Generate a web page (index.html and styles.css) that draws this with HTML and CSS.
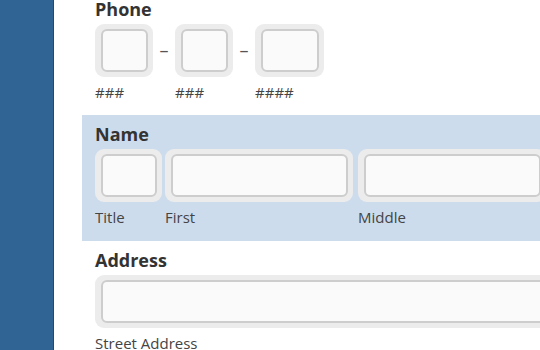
FILE: index.html
```html
<!DOCTYPE html>
<html>
<head>
<meta charset="utf-8">
<link rel="stylesheet" href="styles.css">
</head>
<body>
<div class="page">
  <div class="sidebar"></div>
  <main class="main">
    <ul class="fields">
      <li class="field">
        <h3 class="field-title">Phone</h3>
        <div class="row">
          <div class="part">
            <div class="wrap w-ph3"><input class="inp" type="text"></div>
            <span class="sub">###</span>
          </div>
          <span class="dash">–</span>
          <div class="part">
            <div class="wrap w-ph3"><input class="inp" type="text"></div>
            <span class="sub">###</span>
          </div>
          <span class="dash">–</span>
          <div class="part">
            <div class="wrap w-ph4"><input class="inp" type="text"></div>
            <span class="sub">####</span>
          </div>
        </div>
      </li>
      <li class="field focused">
        <h3 class="field-title">Name</h3>
        <div class="row">
          <div class="part gap-r3">
            <div class="wrap w-title"><input class="inp" type="text"></div>
            <span class="sub">Title</span>
          </div>
          <div class="part gap-r5">
            <div class="wrap w-first"><input class="inp" type="text"></div>
            <span class="sub">First</span>
          </div>
          <div class="part">
            <div class="wrap w-middle"><input class="inp" type="text"></div>
            <span class="sub">Middle</span>
          </div>
        </div>
      </li>
      <li class="field">
        <h3 class="field-title">Address</h3>
        <div class="row">
          <div class="part">
            <div class="wrap w-full"><input class="inp" type="text"></div>
            <span class="sub">Street Address</span>
          </div>
        </div>
      </li>
    </ul>
  </main>
</div>
</body>
</html>
```

FILE: styles.css
```css
html, body {
  margin: 0;
  padding: 0;
  background: #ffffff;
  overflow: hidden;
  width: 540px;
  height: 350px;
}
.page {
  display: flex;
  height: 350px;
  font-family: "Open Sans", "Liberation Sans", sans-serif;
  color: #444;
}
.sidebar {
  width: 53px;
  flex: 0 0 53px;
  background: #306495;
  border-right: 1px solid #1e4a75;
}
.main {
  flex: 1;
  min-width: 0;
}
.fields {
  list-style: none;
  margin: -10px 0 0 0;
  padding: 0 0 0 28px;
}
.field {
  padding: 10px 13px 13px 13px;
  width: 600px;
}
.field.focused {
  background: #cddcec;
  padding-bottom: 14px;
}
.field-title {
  margin: 0 0 5px 0;
  font-size: 18px;
  line-height: 19px;
  font-weight: 700;
  color: #333;
}
.row {
  display: flex;
  align-items: flex-start;
}
.part {
  display: flex;
  flex-direction: column;
}
.gap-r3 { margin-right: 3px; }
.gap-r5 { margin-right: 5px; }
.wrap {
  background: #ececec;
  border-radius: 9px;
  padding: 5px 5px 5px 6px;
  box-sizing: border-box;
}
.inp {
  display: block;
  width: 100%;
  height: 43px;
  box-sizing: border-box;
  margin: 0;
  border: 2px solid #cdcdcd;
  border-radius: 6px;
  background: #fafafa;
  outline: none;
  font: inherit;
}
.w-ph3 { width: 58px; }
.w-ph4 { width: 69px; }
.w-title { width: 67px; }
.w-first { width: 188px; }
.w-middle { width: 188px; }
.w-full { width: 480px; }
.dash {
  width: 22px;
  text-align: center;
  margin-top: 16px;
  font-size: 18px;
  line-height: 20px;
  color: #555;
}
.sub {
  margin-top: 5px;
  font-size: 15px;
  line-height: 20px;
  color: #444;
}
```
